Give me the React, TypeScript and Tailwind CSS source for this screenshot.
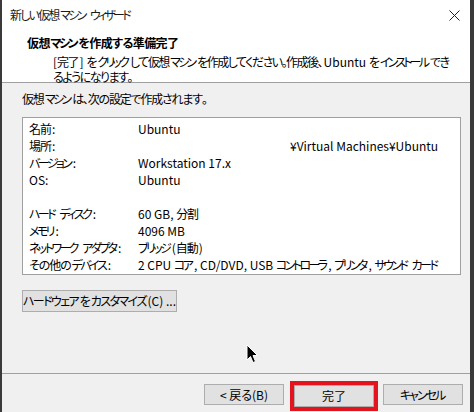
import React from "react";

const rows: [string, string][] = [
  ["名前:", "Ubuntu"],
  ["場所:", "¥Virtual Machines¥Ubuntu"],
  ["バージョン:", "Workstation 17.x"],
  ["OS:", "Ubuntu"],
  ["", ""],
  ["ハード ディスク:", "60 GB, 分割"],
  ["メモリ:", "4096 MB"],
  ["ネットワーク アダプタ:", "ブリッジ(自動)"],
  ["その他のデバイス:", "2 CPU コア, CD/DVD, USB コントローラ, プリンタ, サウンド カード"],
];

const RUNS = /([\u30a0-\u30ff]+|[\u3000-\u303f\u3040-\u309f\u4e00-\u9fff\uff00-\uffef]+)/;
const KATA = /^[\u30a0-\u30ff]/;

// Japanese runs get tighter spacing (katakana tighter still), latin keeps its width.
// The last glyph of a run stays untracked so the following space / colon isn't eaten.
function T({
  s,
  jp = "tracking-[-1.1px]",
  kana = "tracking-[-2.6px]",
}: {
  s: string;
  jp?: string;
  kana?: string;
}) {
  return (
    <span>
      {s.split(RUNS).map((part, i) =>
        i % 2 === 1 ? (
          <React.Fragment key={i}>
            <span className={KATA.test(part) ? kana : jp}>{part.slice(0, -1)}</span>
            {part.slice(-1)}
          </React.Fragment>
        ) : (
          <React.Fragment key={i}>{part}</React.Fragment>
        )
      )}
    </span>
  );
}

function WinButton({ children, className = "" }: { children: React.ReactNode; className?: string }) {
  return (
    <div
      className={`flex h-[21px] w-[80px] items-center justify-center whitespace-pre border border-[#adadad] bg-[#e1e1e1] text-[12px] leading-none text-black ${className}`}
    >
      {children}
    </div>
  );
}

export default function App() {
  return (
    <div className='relative flex h-[412px] w-[474px] flex-col overflow-hidden border-l-2 border-r-4 border-[#3a3a3a] bg-[#f0f0f0] font-["Noto_Sans_CJK_JP",sans-serif] text-[12px] text-black [font-feature-settings:"palt"]'>
      {/* header */}
      <div className="h-[83px] shrink-0 border-b border-[#a0a0a0] bg-white">
        <div className="flex h-[30px] items-center justify-between pl-[8px] pr-[10px]">
          <span className="whitespace-pre text-[#1a1a1a]">
            <T s="新しい仮想マシン ウィザード" jp="tracking-[-1.8px]" kana="tracking-[-2.8px]" />
          </span>
          <svg width="11" height="11" viewBox="0 0 11 11">
            <path d="M0.5 0.5 L10.5 10.5 M10.5 0.5 L0.5 10.5" stroke="#222" strokeWidth="1" />
          </svg>
        </div>
        <div className="mt-[4px] pl-[25px] font-bold leading-[18px]">
          <T s="仮想マシンを作成する準備完了" jp="tracking-[-0.6px]" />
        </div>
        <div className="mt-[2px] whitespace-nowrap pl-[51px] leading-[15px]">
          <T
            s="[完了] をクリックして仮想マシンを作成してください。作成後、Ubuntu をインストールでき"
            jp="tracking-[-1.5px]"
            kana="tracking-[-2.8px]"
          />
          <br />
          <T s="るようになります。" jp="tracking-[-1.5px]" />
        </div>
      </div>

      {/* body */}
      <div className="flex flex-1 flex-col pt-[8px]">
        <div className="ml-[20px] leading-[16px]">
          <T s="仮想マシンは、次の設定で作成されます。" jp="tracking-[-1.2px]" />
        </div>
        <div className="ml-[20px] mt-[10px] w-[439px] border border-[#a0a0a0] bg-white pb-[1px] pl-[6px] pt-[2px]">
          {rows.map(([label, value], i) => (
            <div key={i} className="flex h-[17px] items-center whitespace-pre">
              <span className="w-[109px] shrink-0">
                <T s={label} />
              </span>
              <span className={i === 1 ? "pl-[152px]" : ""}>
                <T s={value} />
              </span>
            </div>
          ))}
        </div>
        <div className="ml-[20px] mt-[15px] flex h-[22px] w-[155px] items-center justify-center whitespace-pre border border-[#adadad] bg-[#e1e1e1]">
          <T s="ハードウェアをカスタマイズ(C) ..." kana="tracking-[-1.6px]" />
        </div>
      </div>

      {/* footer */}
      <div className="flex h-[39px] shrink-0 items-start justify-end border-t border-[#a0a0a0] pr-[7px]">
        <WinButton className="mt-[10px]">
          <T s="< 戻る(B)" jp="tracking-[0px]" />
        </WinButton>
        <div className="ml-[6px] mt-[7px] border-4 border-[#e3141e]">
          <WinButton className="h-[22px] w-[78px]">完了</WinButton>
        </div>
        <WinButton className="ml-[5px] mt-[10px]">
          <T s="キャンセル" kana="tracking-[-2px]" />
        </WinButton>
      </div>

      {/* mouse pointer */}
      <svg className="absolute left-[244px] top-[344px]" width="13" height="20" viewBox="0 0 13 20">
        <path
          d="M1 1 L1 16 L4.5 12.5 L7 18.5 L9.5 17.5 L7 11.5 L11.5 11.5 Z"
          fill="#000"
          stroke="#fff"
          strokeWidth="1"
          strokeLinejoin="round"
        />
      </svg>
    </div>
  );
}
